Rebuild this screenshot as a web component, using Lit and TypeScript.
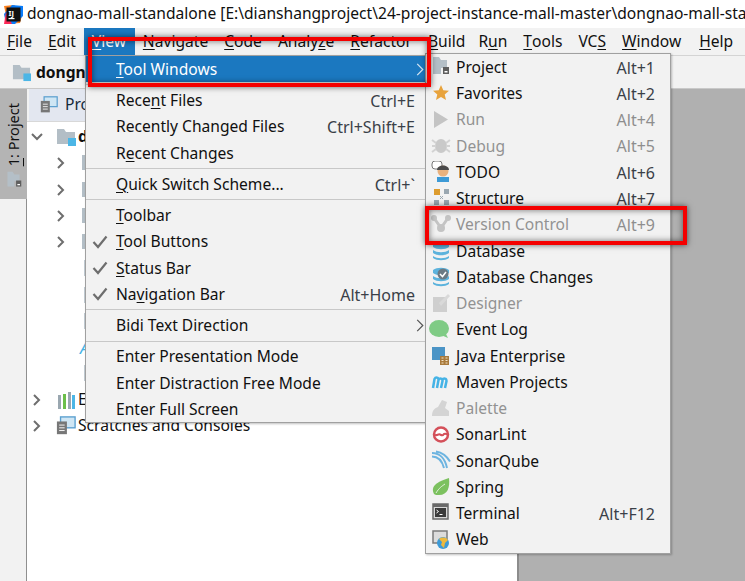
import { LitElement, html, css, svg } from "lit";
import { customElement } from "lit/decorators.js";

const folder = (c = "#b3bec6") => svg`<path d="M1 2h7l2 3h9v12H1z" fill="${c}"/>`;

const icons: Record<string, unknown> = {
  project: svg`<path d="M4 1h6l2 3h6v8h-6v6H4z" fill="#b4bfc7"/><rect x="14" y="11" width="6" height="7" fill="#5e5e5e"/><rect x="15.500" y="15" width="3" height="1.500" fill="#fff"/>`,
  star: svg`<path d="M12 3l2.300 5.200 5.700.5-4.300 3.800 1.300 5.500-5-3-5 3 1.300-5.500L4 8.700l5.700-.5z" fill="#e8a33c"/>`,
  run: svg`<path d="M5 2l14 8.500L5 19z" fill="#c4c4c4"/>`,
  debug: svg`<ellipse cx="12" cy="11" rx="6" ry="7" fill="#c9c9c9"/><path d="M3 5l4 3M3 11h4M3 17l4-3M21 5l-4 3M21 11h-4M21 17l-4-3" stroke="#d2d2d2" stroke-width="2"/>`,
  todo: svg`<rect x="3" y="0" width="10" height="8" rx="3" fill="#fff" stroke="#777"/><circle cx="14" cy="10" r="5.500" fill="#eab27e"/><path d="M8 9c0-6 12-6 12 0z" fill="#4a4a4a"/><rect x="8" y="16" width="12" height="5" fill="#3d9ad6"/>`,
  structure: svg`<rect x="5" y="2" width="6" height="6" fill="#dd9c2e"/><rect x="15" y="2" width="5" height="5" fill="#9aa7b0"/><rect x="5" y="13" width="5" height="5" fill="#9aa7b0"/><rect x="15" y="13" width="5" height="5" fill="#9aa7b0"/><path d="M11 9l3 3M14 9l-3 3" stroke="#9aa7b0"/>`,
  vcs: svg`<circle cx="5" cy="4" r="3" fill="#c4c4c4"/><circle cx="19" cy="4" r="3" fill="#c4c4c4"/><circle cx="12" cy="14" r="4" fill="#c4c4c4"/><path d="M5 4l7 10L19 4" stroke="#c4c4c4" stroke-width="3" fill="none"/>`,
  db: svg`<path d="M4 4c4-3 12-3 16 0v3c-4 3-12 3-16 0zM4 10c4 3 12 3 16 0v3c-4 3-12 3-16 0zM4 16c4 3 12 3 16 0v2c-4 3-12 3-16 0z" fill="#5cb3dd"/>`,
  dbch: svg`<path d="M4 4c4-3 12-3 16 0v3c-4 3-12 3-16 0zM4 10c4 3 12 3 16 0v3c-4 3-12 3-16 0zM4 16c4 3 12 3 16 0v2c-4 3-12 3-16 0z" fill="#5cb3dd"/><circle cx="14" cy="8" r="5.500" fill="#6b7a84"/><path d="M11 8l2.500 2.500L17 6" stroke="#fff" stroke-width="1.500" fill="none"/>`,
  designer: svg`<rect x="4" y="5" width="14" height="15" fill="#cfcfcf"/><path d="M10 11l9-9 2 2-9 10z" fill="#d9d9d9"/>`,
  log: svg`<ellipse cx="10" cy="9.500" rx="10" ry="8.500" fill="#7fcb85"/><path d="M12 16l7 3-3-6z" fill="#7fcb85"/>`,
  java: svg`<rect x="3" y="2" width="13" height="13" fill="#4b94c6"/><rect x="11" y="11" width="9" height="9" fill="#a97a3c"/><path d="M12.500 13h2M12.500 15.500h2M12.500 18h2M16.500 13h2M16.500 15.500h2M16.500 18h2" stroke="#f2e3c6"/>`,
  maven: svg`<path d="M4 17l1.500-9c1-2 4-2 4 1l-1.500 8M9.500 9c1-2 4-2 4 1l-1.500 7M13.500 9c1-2 4-2 4 1l-1.500 7" fill="none" stroke="#45b3e6" stroke-width="2.500"/>`,
  palette: svg`<path d="M3 19c0-6 3-8 6-9l4-7 5 2-2 6 4 3v5z" fill="#d4d4d4"/>`,
  lint: svg`<circle cx="12" cy="10.500" r="7" fill="#fff" stroke="#d4505a" stroke-width="2.500"/><path d="M6 10.500c2 2 3-1 5 0s3 1 3.500 0 2.500-1 4 0" stroke="#d4505a" stroke-width="2" fill="none"/>`,
  qube: svg`<path d="M3 3c7 0 13 5 15 15M3 6.500c6 0 10 4 12 11.500M7 1.500c6 1 11 5 14 10" fill="none" stroke="#6db4e0" stroke-width="2"/>`,
  spring: svg`<path d="M5 18C1 10 8 6 20 2c1 9-1 17-10 17-2 0-4 0-5-1z" fill="#7cc15f"/><path d="M7 17c3-5 6-7 9-9" stroke="#e6f3df" fill="none"/>`,
  term: svg`<rect x="4" y="2" width="15" height="15" fill="#d8d8d8"/><rect x="4" y="2" width="15" height="3" fill="#6a6a6a"/><rect x="4" y="2" width="15" height="15" fill="none" stroke="#6a6a6a" stroke-width="1.500"/><rect x="6" y="6" width="11" height="9" fill="#3b3b3b"/><path d="M7.500 8l2 1.500-2 1.500M10.500 12.500h3" stroke="#fff" fill="none"/>`,
  web: svg`<rect x="4" y="2" width="14" height="12" fill="#dcdcdc" stroke="#7b7b7b" stroke-width="1.500"/><circle cx="14" cy="14" r="6" fill="#3d9ad6"/><path d="M10 10c3-2 7-2 9 1l-3 3-1 5-3-3 1-3z" fill="#eeb93d"/>`,
};

type Sub = { icon: string; label: string; key?: string; off?: boolean };
const subItems: Sub[] = [
  { icon: "project", label: "Project", key: "Alt+1" },
  { icon: "star", label: "Favorites", key: "Alt+2" },
  { icon: "run", label: "Run", key: "Alt+4", off: true },
  { icon: "debug", label: "Debug", key: "Alt+5", off: true },
  { icon: "todo", label: "TODO", key: "Alt+6" },
  { icon: "structure", label: "Structure", key: "Alt+7" },
  { icon: "vcs", label: "Version Control", key: "Alt+9", off: true },
  { icon: "db", label: "Database" },
  { icon: "dbch", label: "Database Changes" },
  { icon: "designer", label: "Designer", off: true },
  { icon: "log", label: "Event Log" },
  { icon: "java", label: "Java Enterprise" },
  { icon: "maven", label: "Maven Projects" },
  { icon: "palette", label: "Palette", off: true },
  { icon: "lint", label: "SonarLint" },
  { icon: "qube", label: "SonarQube" },
  { icon: "spring", label: "Spring" },
  { icon: "term", label: "Terminal", key: "Alt+F12" },
  { icon: "web", label: "Web" },
];

const menuNames = [
  ["", "F", "ile"], ["", "E", "dit"], ["", "V", "iew"], ["", "N", "avigate"], ["", "C", "ode"],
  ["Analy", "z", "e"], ["", "R", "efactor"], ["", "B", "uild"], ["R", "u", "n"], ["", "T", "ools"],
  ["VC", "S", ""], ["", "W", "indow"], ["", "H", "elp"],
];

const check = html`<svg class="check" viewBox="0 0 16 14"><path d="M1.500 7l4.500 5L14.500 1.500" fill="none" stroke="#6e6e6e" stroke-width="2.200"/></svg>`;
const chevron = html`<svg class="more" viewBox="0 0 8 14"><path d="M1 1l6 6-6 6" fill="none" stroke="currentColor" stroke-width="1.300"/></svg>`;
const treeArrow = (open = false) => html`<svg class="arrow" viewBox="0 0 12 12">
  <path d="${open ? "M1 3l5 5 5-5" : "M3 1l5 5-5 5"}" fill="none" stroke="#6e6e6e" stroke-width="2"/></svg>`;
const ic = (name: string) => html`<svg class="ic" viewBox="0 0 22 22">${icons[name]}</svg>`;

@customElement("app-root")
export class AppRoot extends LitElement {
  static styles = css`
    :host { display: block; width: 745px; height: 581px; }
    * { box-sizing: border-box; }
    .win { position: relative; width: 745px; height: 581px; overflow: hidden; background: #f2f2f2;
      font: 15.600px/1 "Noto Sans", sans-serif; color: #101010; display: flex; flex-direction: column; }
    u { text-underline-offset: 2px; text-decoration-thickness: 1px; }
    .title { height: 28px; background: #fff; display: flex; align-items: center; white-space: nowrap; padding-left: 3px; gap: 3px; flex: none; overflow: hidden; }
    .logo { width: 21px; height: 21px; flex: none; }
    .menubar { height: 27px; display: flex; flex: none; background: #f2f2f2; align-items: stretch; }
    .mi { padding: 1px 8px 0; display: flex; align-items: center; white-space: pre; }
    .mi:first-child { margin-left: -1px; }
    .mi.on { background: #1b78c0; color: #fff; width: 51px; }
    .mi.tight { padding-right: 5px; }
    .mi.wide { padding-right: 10px; }
    .nav { height: 34px; flex: none; display: flex; align-items: center; padding: 1px 0 0 12px; gap: 5px; font-weight: 700; border-top: 1px solid #d4d4d4; border-bottom: 1px solid #c9c9c9; }
    .nav svg { width: 19px; height: 19px; flex: none; }
    .main { flex: 1; display: flex; min-height: 0; }
    .strip { width: 27px; flex: none; background: #f2f2f2; border-right: 1px solid #8f8f8f; }
    .tab { height: 110px; background: #b4b4b4; display: flex; flex-direction: column; align-items: center; gap: 5px; padding-top: 14px; margin-right: -1px; width: 27px; }
    .tab .v { writing-mode: vertical-rl; transform: rotate(180deg); font-size: 14.500px; white-space: nowrap; }
    .tab svg { width: 19px; height: 19px; flex: none; }
    .panel { width: 492px; flex: none; background: #fff; border-right: 2px solid #8c8c8c; }
    .phead { height: 33px; background: #f2f2f2; border-bottom: 1px solid #d8d8d8; }
    .ptab { width: 70px; height: 32px; background: #e3e7f0; margin-left: 2px; display: flex; align-items: center; padding-left: 11px; gap: 7px; color: #152a3a; }
    .ptab svg { width: 18px; height: 18px; flex: none; }
    .tree { padding-top: 2px; }
    .tr { height: 26.250px; display: flex; align-items: center; white-space: nowrap; position: relative; }
    .arrow { width: 12px; height: 12px; margin-left: 4px; flex: none; }
    .tr .slot { width: 24px; flex: none; }
    .tr .ti { width: 20px; height: 20px; flex: none; margin-left: 13px; }
    .tr .ti.child { margin-left: 14px; }
    .tr .lab { margin-left: 2px; }
    .leaf { margin-left: 57px; width: 12px; height: 16px; background: #c3cdd4; flex: none; }
    .leaf.a { background: none; color: #45b3e6; font-style: italic; margin-left: 53px; font-size: 17px; width: 16px; }
    .editor { flex: 1; background: #b0b0b0; }
    .menu { position: absolute; background: #f2f2f2; border: 1px solid #a0a0a0; box-shadow: 1px 1px 2px rgba(0,0,0,.25); }
    .m1 { left: 85px; top: 55px; width: 342px; }
    .m2 { left: 425px; top: 53px; width: 246px; }
    .row { height: 26.250px; display: flex; align-items: center; white-space: nowrap; position: relative; padding: 1px 10px 0 30px; }
    .m1 .row { padding-right: 11px; }
    .m2 .row { padding: 1px 15px 0 30px; }
    .row .k { margin-left: auto; color: #3a4048; font-size: 16px; }
    .row.off { color: #929292; }
    .row.off .k { color: #8e8e8e; }
    .row.on { background: #1b78c0; color: #fff; }
    .sep { height: 5px; display: flex; align-items: center; }
    .sep::after { content: ""; flex: 1; height: 1px; background: #c8c8c8; }
    .check { position: absolute; left: 6px; top: 6px; width: 16px; height: 14px; }
    .more { position: absolute; right: 2px; top: 7px; width: 8px; height: 13px; color: #d6e6f2; }
    .more.d { color: #555; }
    .ic { position: absolute; left: 3px; top: 2px; width: 22px; height: 22px; }
    .red { position: absolute; border: 4px solid #f40000; box-shadow: 0 0 6px rgba(0,0,0,.6), inset 0 0 6px rgba(0,0,0,.55); pointer-events: none; }
    .r1 { left: 88px; top: 37px; width: 343px; height: 50px; }
    .r2 { left: 425px; top: 206px; width: 262px; height: 39px; }
  `;

  private row(label: unknown, key = "", extra: unknown = null) {
    return html`<div class="row">${extra}<span>${label}</span>${key ? html`<span class="k">${key}</span>` : null}</div>`;
  }

  render() {
    return html`<div class="win">
      <div class="title">
        <svg class="logo" viewBox="0 0 21 21">
          <path d="M1 2l10-1 9 7-3 11-12 1z" fill="#fc801d"/><path d="M1 10L9 1l11 1 0 10-8 8H3z" fill="#087cfa"/><path d="M3 8L1 20h8z" fill="#fe2857"/>
          <rect x="3.500" y="3.500" width="14" height="14" fill="#111"/>
          <text x="5.500" y="11.500" font-size="7.500" font-weight="700" fill="#fff" font-family="Noto Sans">IJ</text>
          <rect x="5.500" y="14" width="6" height="1.200" fill="#fff"/>
        </svg>
        <span>dongnao-mall-standalone [E:\\dianshangproject\\24-project-instance-mall-master\\dongnao-mall-standalone]</span>
      </div>
      <div class="menubar">
        ${menuNames.map((m, i) => html`<div class="mi ${i === 2 ? "on" : ""} ${i === 7 ? "tight" : ""} ${i === 11 ? "wide" : ""}">${m[0]}<u>${m[1]}</u>${m[2]}</div>`)}
      </div>
      <div class="nav">
        <svg viewBox="0 0 20 20">${folder()}<rect x="12" y="11" width="8" height="8" fill="#4cb6e6"/></svg>
        <span>dongnao-mall-standalone</span>
      </div>
      <div class="main">
        <div class="strip">
          <div class="tab">
            <span class="v"><u>1</u>: Project</span>
            <svg viewBox="0 0 22 22">${icons.project}</svg>
          </div>
        </div>
        <div class="panel">
          <div class="phead"><div class="ptab">
            <svg viewBox="0 0 22 22"><rect x="5" y="1" width="16" height="12" fill="#cfe6f4" stroke="#5a9fcf" stroke-width="1.500"/><rect x="1" y="6" width="11" height="14" fill="#777"/><path d="M3.500 10h6M3.500 13h6M3.500 16h6" stroke="#fff"/></svg>
            <span>Project</span></div></div>
          <div class="tree">
            <div class="tr">${treeArrow(true)}<svg class="ti" viewBox="0 0 20 20">${folder()}<rect x="12" y="11" width="8" height="8" fill="#4cb6e6"/></svg><b class="lab">dongnao-mall-standalone</b></div>
            ${[0, 1, 2, 3].map(() => html`<div class="tr"><span class="slot"></span>${treeArrow()}<svg class="ti child" viewBox="0 0 20 20">${folder()}</svg></div>`)}
            <div class="tr"><div class="leaf"></div></div>
            <div class="tr"><div class="leaf"></div></div>
            <div class="tr"><div class="leaf"></div></div>
            <div class="tr"><div class="leaf a">A</div></div>
            <div class="tr"><div class="leaf"></div></div>
            <div class="tr">${treeArrow()}<svg class="ti" viewBox="0 0 20 20"><path d="M2 5h3v14H2z" fill="#9aa7b0"/><path d="M7 4h3v15H7z" fill="#6cbf4b"/><path d="M12 2h3v17h-3z" fill="#9aa7b0"/><path d="M16 5h3v14h-3z" fill="#4cb6e6"/></svg><span class="lab">External Libraries</span></div>
            <div class="tr">${treeArrow()}<svg class="ti" viewBox="0 0 22 22"><rect x="5" y="1" width="16" height="12" fill="#cfe6f4" stroke="#5a9fcf" stroke-width="1.500"/><rect x="1" y="6" width="11" height="14" fill="#777"/><path d="M3.500 10h6M3.500 13h6M3.500 16h6" stroke="#fff"/></svg><span class="lab">Scratches and Consoles</span></div>
          </div>
        </div>
        <div class="editor"></div>
      </div>

      <div class="menu m1">
        <div class="row on"><span><u>T</u>ool Windows</span>${chevron}</div>
        <div class="sep"></div>
        ${this.row(html`Rece<u>n</u>t Files`, "Ctrl+E")}
        ${this.row("Recently Changed Files", "Ctrl+Shift+E")}
        ${this.row(html`R<u>e</u>cent Changes`)}
        <div class="sep"></div>
        ${this.row(html`<u>Q</u>uick Switch Scheme...`, "Ctrl+\`")}
        <div class="sep"></div>
        ${this.row(html`<u>T</u>oolbar`)}
        ${this.row(html`<u>T</u>ool Buttons`, "", check)}
        ${this.row(html`<u>S</u>tatus Bar`, "", check)}
        ${this.row(html`Na<u>v</u>igation Bar`, "Alt+Home", check)}
        <div class="sep"></div>
        <div class="row"><span>Bidi Text Direction</span><svg class="more d" viewBox="0 0 8 14"><path d="M1 1l6 6-6 6" fill="none" stroke="currentColor" stroke-width="1.300"/></svg></div>
        <div class="sep"></div>
        ${this.row("Enter Presentation Mode")}
        ${this.row("Enter Distraction Free Mode")}
        ${this.row("Enter Full Screen")}
      </div>

      <div class="menu m2">
        ${subItems.map((s) => html`<div class="row ${s.off ? "off" : ""}">${ic(s.icon)}<span>${s.label}</span>${s.key ? html`<span class="k">${s.key}</span>` : null}</div>`)}
      </div>

      <div class="red r1"></div>
      <div class="red r2"></div>
    </div>`;
  }
}
